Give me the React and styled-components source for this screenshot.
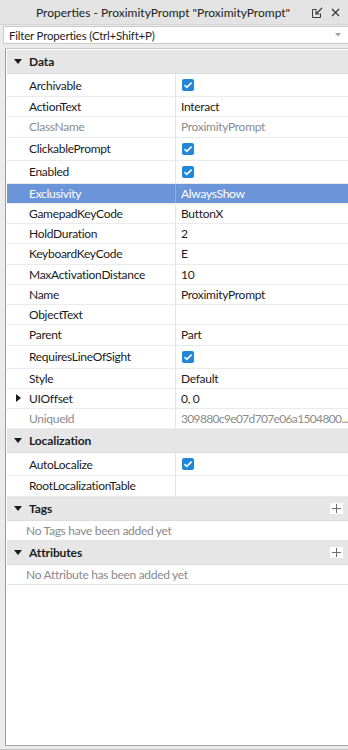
import React from "react";
import styled, { createGlobalStyle } from "styled-components";

const GlobalStyle = createGlobalStyle`
  html, body {
    margin: 0;
    padding: 0;
    background: #ebebeb;
  }
  body {
    font-family: Lato, "Noto Sans", sans-serif;
    color: #1b1b1b;
  }
`;

const dataRows = [
  { name: "Archivable", check: true },
  { name: "ActionText", value: "Interact" },
  { name: "ClassName", value: "ProximityPrompt", muted: true },
  { name: "ClickablePrompt", check: true },
  { name: "Enabled", check: true },
  { name: "Exclusivity", value: "AlwaysShow", selected: true },
  { name: "GamepadKeyCode", value: "ButtonX" },
  { name: "HoldDuration", value: "2" },
  { name: "KeyboardKeyCode", value: "E" },
  { name: "MaxActivationDistance", value: "10" },
  { name: "Name", value: "ProximityPrompt" },
  { name: "ObjectText", value: "" },
  { name: "Parent", value: "Part" },
  { name: "RequiresLineOfSight", check: true },
  { name: "Style", value: "Default" },
  { name: "UIOffset", value: "0, 0", expandable: true },
  { name: "UniqueId", value: "309880c9e07d707e06a1504800...", muted: true, tight: true },
];

const localizationRows = [
  { name: "AutoLocalize", check: true },
  { name: "RootLocalizationTable", value: "" },
];

const Window = styled.div`
  height: 750px;
  display: flex;
  flex-direction: column;
  box-sizing: border-box;
  padding-bottom: 3px;
  border-bottom: 1px solid #c4c4c4;
`;

const TitleBar = styled.div`
  height: 25px;
  flex: none;
  display: flex;
  align-items: center;
  background: #e3e3e3;
  border-bottom: 1px solid #d2d2d2;
  box-sizing: border-box;
`;

const Title = styled.div`
  flex: 1;
  padding-left: 36px;
  font-size: 12px;
  color: #222;
  white-space: nowrap;
`;

const TitleIcons = styled.div`
  display: flex;
  align-items: center;
  gap: 8px;
  padding-right: 8px;
`;

const FilterBar = styled.div`
  height: 18px;
  box-sizing: border-box;
  flex: none;
  margin: 1px 0 0 3px;
  display: flex;
  align-items: center;
  justify-content: space-between;
  padding: 0 7px 0 5px;
  background: #fff;
  border: 1px solid #cbcbcb;
  border-right: none;
  font-size: 11.5px;
  letter-spacing: -0.2px;
  color: #1e1e1e;
`;

const Panel = styled.div`
  flex: 1;
  margin: 4px 0 0 5px;
  background: #fff;
  border-top: 1px solid #c8c8c8;
  border-left: 1px solid #9d9d9d;
  border-bottom: 1px solid #a8a8a8;
  padding: 1px 0 0 1px;
`;

const SectionHeader = styled.div`
  height: 24px;
  box-sizing: border-box;
  display: flex;
  align-items: center;
  background: #e6e6e6;
  border-bottom: 1px solid #dcdcdc;
  padding-right: 5px;
  font-size: 12px;
  letter-spacing: -0.1px;
  font-weight: 700;
  color: #1b1b1b;
`;

const Arrow = styled.span`
  width: 22px;
  flex: none;
  display: flex;
  justify-content: center;
`;

const HeaderLabel = styled.span`
  flex: 1;
`;

const AddButton = styled.span`
  width: 13px;
  height: 11px;
  background: #fff;
  display: flex;
  align-items: center;
  justify-content: center;
`;

const Row = styled.div`
  display: grid;
  grid-template-columns: 168px 1fr;
  height: ${(p) => (p.$tall ? "23px" : "20.25px")};
  box-sizing: border-box;
  border-bottom: 1px solid #ebebeb;
  background: ${(p) => (p.$selected ? "#6a95d8" : "#fff")};
  font-size: 12px;
  letter-spacing: -0.3px;
  color: ${(p) => (p.$selected ? "#fff" : "#1b1b1b")};
`;

const NameCell = styled.div`
  display: flex;
  align-items: center;
  color: ${(p) => (p.$muted ? "#8c8c8c" : "inherit")};
  white-space: nowrap;
  overflow: hidden;
`;

const ValueCell = styled.div`
  display: flex;
  align-items: center;
  padding-left: 5px;
  border-left: 1px solid ${(p) => (p.$selected ? "#8aaee4" : "#e4e4e4")};
  color: ${(p) => (p.$muted ? "#8c8c8c" : "inherit")};
  letter-spacing: ${(p) => (p.$tight ? "-0.65px" : "inherit")};
  white-space: nowrap;
  overflow: hidden;
`;

const Checkbox = styled.span`
  width: 12px;
  height: 12px;
  margin-left: 1px;
  border-radius: 2px;
  background: #1f86d8;
  display: flex;
  align-items: center;
  justify-content: center;
`;

const EmptyNote = styled.div`
  height: 20px;
  box-sizing: border-box;
  display: flex;
  align-items: center;
  padding-left: 19px;
  border-bottom: 1px solid #e4e4e4;
  font-size: 12px;
  letter-spacing: -0.3px;
  color: #8a8a8a;
`;

const Down = () => (
  <svg width="8" height="5" viewBox="0 0 8 5">
    <path d="M0 0h8L4 5z" fill="#1b1b1b" />
  </svg>
);

const SmallDown = () => (
  <svg width="6" height="4" viewBox="0 0 6 4">
    <path d="M0 0h6L3 3.5z" fill="#a0a0a0" />
  </svg>
);

const Right = () => (
  <svg width="5" height="8" viewBox="0 0 5 8">
    <path d="M0 0v8l5-4z" fill="#1b1b1b" />
  </svg>
);

const Check = () => (
  <svg width="10" height="8" viewBox="0 0 10 8">
    <path d="M1.5 4.2l2.3 2.2L8.6 1.6" fill="none" stroke="#fff" strokeWidth="1.6" />
  </svg>
);

const Plus = () => (
  <svg width="9" height="9" viewBox="0 0 9 9">
    <path d="M4.5 0v9M0 4.5h9" stroke="#6e6e6e" strokeWidth="1" />
  </svg>
);

const Undock = () => (
  <svg width="11" height="11" viewBox="0 0 11 11">
    <path d="M4.5 2.5H0.5v8h8v-4" fill="none" stroke="#3a3a3a" strokeWidth="1" />
    <path d="M10 1L4 7M4 3.5V7h3.5" fill="none" stroke="#3a3a3a" strokeWidth="1.2" />
  </svg>
);

const Close = () => (
  <svg width="9" height="9" viewBox="0 0 9 9">
    <path d="M1 1l7 7M8 1L1 8" stroke="#3a3a3a" strokeWidth="1.3" />
  </svg>
);

const PropRow = ({ row }) => (
  <Row $tall={row.check} $selected={row.selected}>
    <NameCell $muted={row.muted}>
      <Arrow>{row.expandable && <Right />}</Arrow>
      {row.name}
    </NameCell>
    <ValueCell $muted={row.muted} $selected={row.selected} $tight={row.tight}>
      {row.check ? (
        <Checkbox>
          <Check />
        </Checkbox>
      ) : (
        row.value
      )}
    </ValueCell>
  </Row>
);

const Section = ({ title, rows, addable, empty }) => (
  <>
    <SectionHeader>
      <Arrow>
        <Down />
      </Arrow>
      <HeaderLabel>{title}</HeaderLabel>
      {addable && (
        <AddButton>
          <Plus />
        </AddButton>
      )}
    </SectionHeader>
    {rows && rows.map((r) => <PropRow key={r.name} row={r} />)}
    {empty && <EmptyNote>{empty}</EmptyNote>}
  </>
);

export default function App() {
  return (
    <Window>
      <GlobalStyle />
      <TitleBar>
        <Title>Properties - ProximityPrompt "ProximityPrompt"</Title>
        <TitleIcons>
          <Undock />
          <Close />
        </TitleIcons>
      </TitleBar>
      <FilterBar>
        <span>Filter Properties (Ctrl+Shift+P)</span>
        <SmallDown />
      </FilterBar>
      <Panel>
        <Section title="Data" rows={dataRows} />
        <Section title="Localization" rows={localizationRows} />
        <Section title="Tags" addable empty="No Tags have been added yet" />
        <Section title="Attributes" addable empty="No Attribute has been added yet" />
      </Panel>
    </Window>
  );
}
